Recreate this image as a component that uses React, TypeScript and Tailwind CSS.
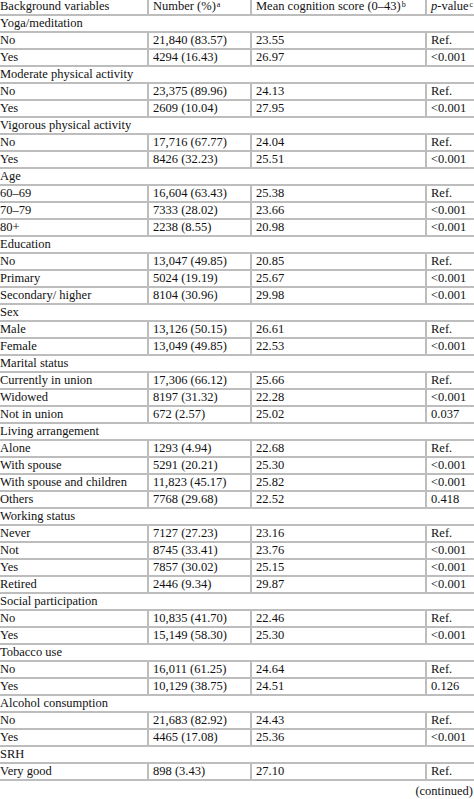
import React from 'react';

type Row = { label: string; n?: string; mean?: string; p?: string; group?: boolean };

const g = (label: string): Row => ({ label, group: true });
const r = (label: string, n: string, mean: string, p: string): Row => ({ label, n, mean, p });

const rows: Row[] = [
  g('Yoga/meditation'),
  r('No', '21,840 (83.57)', '23.55', 'Ref.'),
  r('Yes', '4294 (16.43)', '26.97', '<0.001'),
  g('Moderate physical activity'),
  r('No', '23,375 (89.96)', '24.13', 'Ref.'),
  r('Yes', '2609 (10.04)', '27.95', '<0.001'),
  g('Vigorous physical activity'),
  r('No', '17,716 (67.77)', '24.04', 'Ref.'),
  r('Yes', '8426 (32.23)', '25.51', '<0.001'),
  g('Age'),
  r('60–69', '16,604 (63.43)', '25.38', 'Ref.'),
  r('70–79', '7333 (28.02)', '23.66', '<0.001'),
  r('80+', '2238 (8.55)', '20.98', '<0.001'),
  g('Education'),
  r('No', '13,047 (49.85)', '20.85', 'Ref.'),
  r('Primary', '5024 (19.19)', '25.67', '<0.001'),
  r('Secondary/ higher', '8104 (30.96)', '29.98', '<0.001'),
  g('Sex'),
  r('Male', '13,126 (50.15)', '26.61', 'Ref.'),
  r('Female', '13,049 (49.85)', '22.53', '<0.001'),
  g('Marital status'),
  r('Currently in union', '17,306 (66.12)', '25.66', 'Ref.'),
  r('Widowed', '8197 (31.32)', '22.28', '<0.001'),
  r('Not in union', '672 (2.57)', '25.02', '0.037'),
  g('Living arrangement'),
  r('Alone', '1293 (4.94)', '22.68', 'Ref.'),
  r('With spouse', '5291 (20.21)', '25.30', '<0.001'),
  r('With spouse and children', '11,823 (45.17)', '25.82', '<0.001'),
  r('Others', '7768 (29.68)', '22.52', '0.418'),
  g('Working status'),
  r('Never', '7127 (27.23)', '23.16', 'Ref.'),
  r('Not', '8745 (33.41)', '23.76', '<0.001'),
  r('Yes', '7857 (30.02)', '25.15', '<0.001'),
  r('Retired', '2446 (9.34)', '29.87', '<0.001'),
  g('Social participation'),
  r('No', '10,835 (41.70)', '22.46', 'Ref.'),
  r('Yes', '15,149 (58.30)', '25.30', '<0.001'),
  g('Tobacco use'),
  r('No', '16,011 (61.25)', '24.64', 'Ref.'),
  r('Yes', '10,129 (38.75)', '24.51', '0.126'),
  g('Alcohol consumption'),
  r('No', '21,683 (82.92)', '24.43', 'Ref.'),
  r('Yes', '4465 (17.08)', '25.36', '<0.001'),
  g('SRH'),
  r('Very good', '898 (3.43)', '27.10', 'Ref.'),
];

const cell = 'border-l-2 border-[#bdbdbd] pl-[4px]';
const sup = 'text-[8px] ml-px align-baseline relative -top-[4px]';

export default function App() {
  return (
    <div
      className="w-[474px] h-[799px] overflow-hidden bg-white text-[#111] text-[12.5px] leading-none"
      style={{ fontFamily: '"Liberation Serif", "Times New Roman", serif' }}
    >
      {/* Header */}
      <div className="grid grid-cols-[147px_103px_175px_49px] h-[16px] border-b-2 border-[#bdbdbd] whitespace-nowrap">
        <div className="flex items-end pb-[2px]">Background variables</div>
        <div className={`${cell} flex items-end pb-[2px]`}>
          Number (%)<span className={sup}>a</span>
        </div>
        <div className={`${cell} flex items-end pb-[2px]`}>
          Mean cognition score (0–43)<span className={sup}>b</span>
        </div>
        <div className={`${cell} flex items-end pb-[2px]`}>
          <i>p</i>-value<span className={sup}>c</span>
        </div>
      </div>

      {rows.map((row, i) =>
        row.group ? (
          <div key={i} className="h-[17px] border-b-2 border-[#bdbdbd] flex items-center whitespace-nowrap">
            {row.label}
          </div>
        ) : (
          <div
            key={i}
            className="grid grid-cols-[147px_103px_175px_49px] h-[17px] border-b-2 border-[#bdbdbd] whitespace-nowrap"
          >
            <div className="flex items-center">{row.label}</div>
            <div className={`${cell} flex items-center`}>{row.n}</div>
            <div className={`${cell} flex items-center`}>{row.mean}</div>
            <div className={`${cell} flex items-center`}>{row.p}</div>
          </div>
        )
      )}

      <div className="flex justify-end pt-[4px] pr-[1px]">(continued)</div>
    </div>
  );
}
